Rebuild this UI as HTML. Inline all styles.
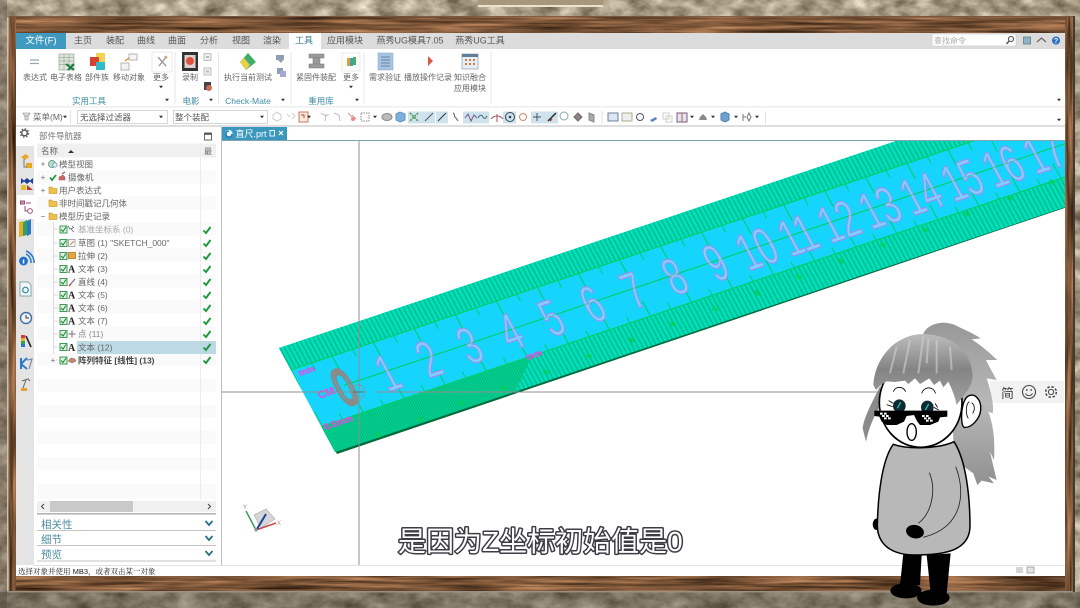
<!DOCTYPE html>
<html lang="zh"><head><meta charset="utf-8"><title>UG</title>
<style>
html,body{margin:0;padding:0;background:#8a8378;width:1080px;height:608px;overflow:hidden}
svg{display:block}
text{font-family:"Liberation Sans","Noto Sans CJK SC",sans-serif}
.t{font-size:8px;fill:#666}
.m{text-anchor:middle}
.g{font-size:8.5px;fill:#3f8ea6;text-anchor:middle}
.n{font-size:8.5px;fill:#666}
.ac{font-size:10.5px;fill:#4d8ba0}
.d{font-size:54px;fill:#7fd0ff;stroke:#a08cf0;stroke-width:1.2;text-anchor:middle}
.pk{font-size:9.5px;font-weight:bold;fill:#e64ce6;stroke:#e64ce6;stroke-width:.2}
</style></head><body>
<svg width="1080" height="608" viewBox="0 0 1080 608" xmlns="http://www.w3.org/2000/svg">
<defs>
<filter id="stone" x="0" y="0" width="100%" height="100%" color-interpolation-filters="sRGB"><feTurbulence type="fractalNoise" baseFrequency="0.045 0.07" numOctaves="5" seed="7"/><feColorMatrix values=".75 0 0 0 .28  .75 0 0 0 .23  .75 0 0 0 .14  0 0 0 0 1"/></filter>
<filter id="woodH" x="0" y="0" width="100%" height="100%" color-interpolation-filters="sRGB"><feTurbulence type="fractalNoise" baseFrequency="0.012 0.3" numOctaves="4" seed="3"/><feColorMatrix values=".8 0 0 0 .08  .6 0 0 0 .03  .45 0 0 0 -.01  0 0 0 0 1"/></filter>
<filter id="woodV" x="0" y="0" width="100%" height="100%" color-interpolation-filters="sRGB"><feTurbulence type="fractalNoise" baseFrequency="0.3 0.012" numOctaves="4" seed="5"/><feColorMatrix values=".8 0 0 0 .08  .6 0 0 0 .03  .45 0 0 0 -.01  0 0 0 0 1"/></filter>
<filter id="soft"><feGaussianBlur stdDeviation=".35"/></filter>
<clipPath id="vp"><rect x="222" y="141" width="843" height="424"/></clipPath>
<pattern id="hat" width="4.33" height="10" patternUnits="userSpaceOnUse"><rect width="4.33" height="10" fill="#00e0b6"/><rect width="1.4" height="10" fill="#00b894"/></pattern>
<pattern id="den" width="2.165" height="10" patternUnits="userSpaceOnUse"><rect width="2.165" height="10" fill="#00d292"/><rect width=".9" height="10" fill="#00b87c"/></pattern>
<pattern id="tickT" x="43" y="25" width="43.3" height="20" patternUnits="userSpaceOnUse"><rect x="0" width="1.1" height="18" fill="#00cf66"/><rect x="21.6" width="1" height="8" fill="#00cf66"/></pattern>
<pattern id="tickB" x="22" y="70" width="43.3" height="20" patternUnits="userSpaceOnUse"><rect x="21.6" y="2" width="1.1" height="18" fill="#00cf66"/><rect x="0" y="12" width="1" height="8" fill="#00cf66"/></pattern>
<linearGradient id="hg" x1="0" y1="0" x2="0" y2="1"><stop offset="0" stop-color="#bcbcbc"/><stop offset=".5" stop-color="#848484"/><stop offset="1" stop-color="#a0a0a0"/></linearGradient>
<linearGradient id="pg" x1="0" y1="0" x2="0" y2="1"><stop offset="0" stop-color="#989898"/><stop offset=".5" stop-color="#b8b8b8"/><stop offset="1" stop-color="#909090"/></linearGradient>
<g id="c"><path d="M-3,1 L3,-1 M-1,-3 L1,3 M-2.5,-2 L2.5,2" stroke="#00cf55" stroke-width="1.1" fill="none"/></g>
<path id="tk" d="M-3.5,.5 L-1,3 L3.5,-3" stroke="#1d9a3e" stroke-width="1.9" fill="none"/>
<g id="cb"><rect x="-3" y="-3.5" width="7" height="7" fill="#dff3e0" stroke="#2e8f4a" stroke-width=".9"/><path d="M-2,0 L0,2 L3,-2.5" stroke="#1d8a3a" stroke-width="1.1" fill="none"/></g>
<path id="dn" d="M-2,-1.2 L2,-1.2 L0,1.2 Z" fill="#333"/>
<path id="chev" d="M-3.5,-2 L0,2 L3.5,-2" stroke="#2a6f87" stroke-width="1.8" fill="none"/>
</defs>

<!-- stone background -->
<rect width="1080" height="608" fill="#968e80" filter="url(#stone)"/>
<rect y="592" width="1080" height="16" fill="#3a3630" opacity=".4"/>
<rect x="0" y="0" width="7" height="608" fill="#3a3028" opacity=".3"/>
<rect x="478" y="0" width="125" height="5" fill="#a8977b"/><rect x="478" y="5" width="125" height="2" fill="#ece2d0"/>

<!-- wood frame -->
<rect x="7" y="16" width="1066" height="17" filter="url(#woodH)"/>
<rect x="7" y="576" width="1066" height="16" filter="url(#woodH)"/>
<rect x="7" y="16" width="9" height="576" filter="url(#woodV)"/>
<rect x="1065" y="16" width="9" height="576" filter="url(#woodV)"/>
<rect x="7" y="16" width="1.5" height="576" fill="#cfc3b0"/>
<rect x="7" y="16" width="1067" height="1.2" fill="#7b5a42" opacity=".8"/>
<rect x="7" y="591" width="1067" height="1.5" fill="#9a9084"/>
<rect x="1073" y="16" width="2" height="576" fill="#403a34"/>

<g filter="url(#soft)">
<!-- UI base -->
<rect x="16" y="33" width="1049" height="543" fill="#fff"/>
<rect x="16" y="33" width="1049" height="16" fill="#dcdcdc"/>
<rect x="16" y="33" width="50" height="16" fill="#3f9abf"/>
<text x="41" y="43.5" class="m" style="font-size:9.5px;fill:#fff">文件(F)</text>
<rect x="289" y="33" width="32" height="16" fill="#fff"/>
<g>
<text x="83" y="43.5" class="m" font-size="9" fill="#555">主页</text>
<text x="115" y="43.5" class="m" font-size="9" fill="#555">装配</text>
<text x="146" y="43.5" class="m" font-size="9" fill="#555">曲线</text>
<text x="177" y="43.5" class="m" font-size="9" fill="#555">曲面</text>
<text x="209" y="43.5" class="m" font-size="9" fill="#555">分析</text>
<text x="241" y="43.5" class="m" font-size="9" fill="#555">视图</text>
<text x="272" y="43.5" class="m" font-size="9" fill="#555">渲染</text>
<text x="304" y="43.5" class="m" font-size="9" fill="#3a7d99">工具</text>
<text x="345" y="43.5" class="m" font-size="9" fill="#555">应用模块</text>
<text x="410" y="43.5" class="m" font-size="9" fill="#555">燕秀UG模具7.05</text>
<text x="480" y="43.5" class="m" font-size="9" fill="#555">燕秀UG工具</text>
</g>
<!-- search -->
<rect x="932" y="34" width="84" height="12" fill="#fff" stroke="#c8c8c8" stroke-width=".6"/>
<text x="934" y="43.5" font-size="8" fill="#aaa">查找命令</text>
<circle cx="1011" cy="39" r="2.6" fill="#eee" stroke="#555"/><path d="M1009,41 L1006.5,44" stroke="#555" stroke-width="1.4"/>
<rect x="1023.5" y="37" width="7" height="7" fill="#8fb3c9" stroke="#466" stroke-width=".6"/>
<path d="M1037,42 L1041.5,38 L1046,42" stroke="#666" stroke-width="1.2" fill="none"/>
<circle cx="1056" cy="40.5" r="4" fill="#2c6fc4"/><text x="1056" y="43.2" class="m" font-size="7" font-weight="bold" fill="#fff">?</text>

<!-- ribbon -->
<g stroke="#e2e2e2" stroke-width=".8"><path d="M175,52 V104 M218.5,52 V104 M291,52 V104 M364,52 V104 M491,52 V104"/></g>
<path d="M30,60 H39 M30,63.5 H39" stroke="#9aa6b2" stroke-width="1.2"/>
<g><rect x="59" y="54" width="15" height="16" fill="#dfe6dc" stroke="#8a9a88" stroke-width=".6"/><path d="M59,57.5 H74 M59,61 H74 M59,64.5 H74 M64,54 V70 M69,54 V70" stroke="#7e9a80" stroke-width=".5"/><path d="M66,64 L74,70 M74,64 L68,70" stroke="#157a3a" stroke-width="2"/></g>
<g><rect x="96" y="53" width="9" height="11" fill="#f2d35a"/><rect x="90" y="57" width="9" height="9" fill="#d9432f"/><rect x="96" y="62" width="9" height="8" fill="#36b8cc"/></g>
<g fill="#f4f4f4" stroke="#999" stroke-width=".7"><rect x="129" y="54" width="8" height="6"/><rect x="121" y="63" width="8" height="7"/></g><path d="M125,61 L129,58" stroke="#d88a2a" stroke-width="1.2"/>
<rect x="152" y="52" width="20" height="20" rx="1" fill="#fff" stroke="#eaeaea"/><path d="M158,57 L166,66 M166,57 L159,66" stroke="#999" stroke-width="1.4"/><path d="M165,56 l2,2" stroke="#c96" stroke-width="1.6"/>
<rect x="182" y="52" width="16" height="19" fill="#333"/><rect x="184.5" y="55" width="11" height="13" fill="#d9d3cc"/><circle cx="190" cy="61" r="4" fill="#e0503c"/>
<rect x="204" y="53.5" width="7" height="7" fill="#eee" stroke="#aaa" stroke-width=".7"/><rect x="206" y="56" width="3" height="2" fill="#bbb"/>
<rect x="204" y="68" width="7" height="7" fill="#eee" stroke="#aaa" stroke-width=".7"/><rect x="206" y="70.5" width="3" height="2" fill="#bbb"/>
<rect x="204" y="82" width="7" height="8" fill="#444"/><circle cx="209" cy="88" r="3" fill="#d36a5a"/>
<path d="M240,62 L246,70 L256,62 L248,53 Z" fill="#41ad6b"/><path d="M240,62 L246,70 L250,65 L244,58 Z" fill="#e8cf44"/>
<g fill="#8fa0b4"><rect x="276" y="55" width="8" height="5"/><path d="M277,59 l7,0 -3,4 z"/><rect x="277" y="68" width="6" height="6"/><rect x="280" y="71" width="6" height="6" fill="#a7a7d6"/></g>
<g fill="#9a9a9a" stroke="#777" stroke-width=".5"><rect x="309" y="54" width="15" height="4"/><rect x="313" y="58" width="7" height="7"/><rect x="309" y="64" width="15" height="4"/></g>
<rect x="342" y="53" width="18" height="18" rx="1" fill="#fff" stroke="#eaeaea"/><rect x="347" y="58" width="3" height="8" fill="#e0a030"/><rect x="350" y="58" width="3" height="8" fill="#3aa0c8"/><rect x="353" y="57" width="3" height="8" fill="#4fae5a"/>
<rect x="378" y="53" width="15" height="17" fill="#a9c4e2" stroke="#8aa2c0" stroke-width=".5"/><path d="M381,57 H390 M381,60 H390 M381,63 H390 M381,66 H390" stroke="#6b83a6" stroke-width=".9"/>
<path d="M428,56 L433,61 L428,66 Z" fill="#d85c44"/>
<rect x="462" y="54" width="16" height="15" fill="#e7eef5" stroke="#7e8fa2" stroke-width=".6"/><rect x="462" y="54" width="16" height="3" fill="#5f7e9c"/><g fill="#d07a3a"><rect x="465" y="59" width="2" height="2"/><rect x="469" y="59" width="2" height="2"/><rect x="473" y="59" width="2" height="2"/><rect x="465" y="63" width="2" height="2"/><rect x="469" y="63" width="2" height="2"/><rect x="473" y="63" width="2" height="2"/></g>
<g>
<text x="35" y="80" class="t m">表达式</text><text x="66" y="80" class="t m">电子表格</text><text x="97" y="80" class="t m">部件族</text><text x="129" y="80" class="t m">移动对象</text><text x="161" y="80" class="t m">更多</text><text x="190" y="80" class="t m">录制</text><text x="248" y="80" class="t m">执行当前测试</text><text x="316" y="80" class="t m">紧固件装配</text><text x="351" y="80" class="t m">更多</text><text x="385" y="80" class="t m">需求验证</text><text x="428" y="80" class="t m">播放操作记录</text><text x="470" y="80" class="t m">知识融合</text><text x="470" y="91" class="t m">应用模块</text>
</g>
<text x="89" y="104" class="g">实用工具</text><text x="191" y="104" class="g">电影</text><text x="248" y="104" class="g">Check-Mate</text><text x="321" y="104" class="g">重用库</text>
<use href="#dn" x="161" y="87"/><use href="#dn" x="351" y="87"/><use href="#dn" x="167" y="100"/><use href="#dn" x="211" y="100"/><use href="#dn" x="283" y="100"/><use href="#dn" x="357" y="100"/><use href="#dn" x="1059" y="100"/>
<rect x="16" y="106.5" width="1049" height=".8" fill="#e2e2e2"/>

<!-- toolbar -->
<rect x="16" y="125.5" width="1049" height="1" fill="#bdbdbd"/>
<path d="M23,113 h7 l-1.5,3 h-4 z M25,116 v4 h3 v-4" fill="#ddd" stroke="#888" stroke-width=".6"/>
<text x="33" y="120" font-size="8.5" fill="#666">菜单(M)</text><use href="#dn" x="65" y="117"/>
<path d="M70.5,110 V124" stroke="#e2e2e2"/>
<rect x="77.5" y="110.5" width="90" height="13" fill="#fff" stroke="#c6c6c6" stroke-width=".7"/><text x="80" y="120.5" font-size="8.5" fill="#555">无选择过滤器</text><use href="#dn" x="161" y="117"/>
<rect x="173.5" y="110.5" width="94" height="13" fill="#fff" stroke="#c6c6c6" stroke-width=".7"/><text x="175" y="120.5" font-size="8.5" fill="#555">整个装配</text><use href="#dn" x="262" y="117"/>
<!-- highlights -->
<g fill="#cfe3ec"><rect x="408" y="111.5" width="27" height="12"/><rect x="436" y="111.5" width="12" height="12"/><rect x="463" y="111.5" width="26" height="12"/><rect x="503" y="111.5" width="13" height="12"/><rect x="531" y="111.5" width="27" height="12"/></g>
<g fill="none" stroke="#aaa" stroke-width="1">
<path d="M273,115 l4,-3 4,3 v4 l-4,2 -4,-2z" stroke="#ccc"/><path d="M287,114 l3,3 M292,113 l3,3 -3,3" stroke="#ccc"/>
<rect x="299" y="112" width="9" height="10" fill="#fbe9df" stroke="#c97a5a"/><path d="M301,115 h3 v3" stroke="#c04040"/>
<path d="M321,113 l5,3 -1,5 M329,115 l-4,0" stroke="#bbb"/><path d="M334,113 l5,2 1,6" stroke="#bbb"/><path d="M348,113 l4,4 M352,115 l4,4" stroke="#c98"/><circle cx="353" cy="119" r="2" fill="#e88" stroke="none"/>
<rect x="361" y="113" width="8" height="8" stroke="#888" stroke-dasharray="1.5 1"/>
<ellipse cx="387" cy="117" rx="5" ry="3.5" fill="#bbb" stroke="#888"/><path d="M396,114 l4,-2 5,2 v6 l-5,2 -4,-2 z" fill="#7db1dd" stroke="#5f93c0"/>
<path d="M410,113 l8,8 M418,113 l-8,8" stroke="#4d9a5a" stroke-width="1.6" stroke-dasharray="2 1"/><path d="M425,121 l8,-8" stroke="#556" /><path d="M438,121 l8,-8" stroke="#334"/><path d="M453,113 c2,0 1,5 3,5 l2,3" stroke="#556"/>
<path d="M465,118 l3,-4 3,7 3,-6 3,3" stroke="#7a5a8a"/><path d="M478,118 c2,-4 4,-3 5,-1 c2,3 3,1 4,-1" stroke="#467"/><path d="M491,119 c3,-4 9,-4 12,0 M497,114 v8" stroke="#a56"/>
<circle cx="510" cy="117" r="4.5" stroke="#345"/><circle cx="510" cy="117" r="1.3" fill="#345" stroke="none"/>
<circle cx="523" cy="117" r="3.5" stroke="#d08a70"/><path d="M533,117 h8 M537,113 v8" stroke="#456"/><path d="M548,121 l8,-8" stroke="#233" stroke-width="1.5"/><path d="M550,121 l2,-2" stroke="#c33" stroke-width="1.5"/>
<circle cx="564" cy="116" r="4" stroke="#8aa"/><path d="M574,117 l4,-4 4,4 -4,4z" fill="#888" stroke="#766"/><path d="M589,113 l5,2 v7 l-5,-2z" fill="#aaa" stroke="#888"/>
<rect x="608" y="113" width="10" height="8" fill="#dde5ee" stroke="#6a7fa0"/><rect x="622" y="113" width="10" height="8" fill="#eee" stroke="#b0a890"/><circle cx="640" cy="117" r="3.5" stroke="#556"/><path d="M650,120 l6,-3 l1,2 l-5,3z" fill="#5b7fc0" stroke="none"/><rect x="663" y="113" width="6" height="6" stroke="#ccc"/><rect x="666" y="116" width="6" height="6" stroke="#ccc"/>
<rect x="677" y="113" width="10" height="9" fill="#dfe6f0" stroke="#7a5a7a"/><path d="M682,113 v9" stroke="#c55"/>
<path d="M699,120 h8 l-1,-3 -3,-3 -3,3z" fill="#8a8a8a" stroke="none"/><path d="M721,114 l4,-2 4,2 v6 l-4,2 -4,-2z" fill="#6f9fd0" stroke="#4d7fb0"/><path d="M743,114 l0,7 M743,117 h3 M749,113 l2,4 -2,4 -2,-4z" stroke="#777"/>
</g>
<use href="#dn" x="309" y="117"/><use href="#dn" x="375" y="117"/><use href="#dn" x="692" y="117"/><use href="#dn" x="713" y="117"/><use href="#dn" x="736" y="117"/><use href="#dn" x="757" y="117"/><use href="#dn" x="1059" y="120"/>
<path d="M602,111 V124 M765.5,111 V124" stroke="#e2e2e2"/>

<!-- left sidebar -->
<rect x="16" y="146" width="18" height="419" fill="#e4e4e4"/>
<rect x="17" y="195" width="17" height="24" fill="#fff"/>
<g transform="translate(24.5,133)"><circle r="2.8" fill="none" stroke="#555" stroke-width="1.4"/><circle r="4.2" fill="none" stroke="#555" stroke-width="1.2" stroke-dasharray="1.6 1.7"/></g>
<g><path d="M21,157 l5,-3 3,3 -4,3z M26,163 h6 v5 h-6z" fill="#e6a822"/><path d="M24,159 v8 h3" stroke="#777" fill="none"/></g>
<g><path d="M21,178 l3,2.5 3,-2.5 3,2.5 3,-2.5 v6 l-3,-2.5 -3,2.5 -3,-2.5 -3,2.5z" fill="#1f3f9a"/><rect x="21" y="185" width="5" height="5" fill="#e2c030"/><path d="M27,185 l6,5 h-6z" fill="#c0392b"/></g>
<g stroke="#a24a7a" fill="none"><rect x="20.5" y="201" width="4" height="3" fill="#d9a"/><path d="M26,203 h5 M25,206 v5 h3"/><circle cx="30" cy="211" r="2.4"/></g>
<g><path d="M19,222 l4,-1 v15 l-4,1z" fill="#e2b022"/><path d="M23,222 l4,-2 v15 l-4,1z" fill="#35a060"/><path d="M27,221 l4,-2 v15 l-4,2z" fill="#2a78c8"/></g>
<g fill="none"><circle cx="23.5" cy="261" r="4.4" fill="#1f6fc8"/><rect x="22.8" y="259.5" width="1.5" height="4" fill="#fff"/><path d="M26,254 a9,9 0 0 1 5,9 M26,251 a12,12 0 0 1 8,12" stroke="#2a78c8" stroke-width="1.5"/></g>
<g><path d="M20,282 h8 l3,3 v11 h-11z" fill="#f2f6f8" stroke="#6a8a9a" stroke-width=".7"/><circle cx="25.5" cy="290" r="2.8" fill="none" stroke="#2a8f9a" stroke-width="1.2"/></g>
<g><circle cx="26" cy="318" r="5.5" fill="#f2f2f2" stroke="#3a6fa8" stroke-width="1.4"/><path d="M26,315 v3 h3" stroke="#334" fill="none"/></g>
<g><rect x="21" y="335" width="4" height="3" fill="#d23a3a"/><rect x="21" y="338" width="4" height="3" fill="#e6b022"/><rect x="21" y="341" width="4" height="3" fill="#35a060"/><rect x="21" y="344" width="4" height="3" fill="#2a78c8"/><path d="M26,336 l5,11" stroke="#223" stroke-width="1.6"/></g>
<g><path d="M21,358 v11 M21,364 l6,-6 M21,364 l6,5" stroke="#2a78c8" stroke-width="2" fill="none"/><path d="M27,360 l5,-1 -3,10" stroke="#7a8aa0" stroke-width="1.2" fill="none"/></g>
<g stroke="#666" fill="none"><path d="M22,381 l6,-2 2,2 M26,380 l-3,8"/><rect x="21" y="388" width="6" height="3" fill="#e6a030" stroke="none"/></g>

<!-- navigator -->
<text x="39" y="139" font-size="8.5" fill="#777">部件导航器</text>
<rect x="204.5" y="133" width="7" height="7" fill="#fff" stroke="#555" stroke-width=".9"/><rect x="204.5" y="133" width="7" height="1.8" fill="#555"/>
<rect x="37" y="143.5" width="179" height="14" fill="#f0f0f0"/>
<text x="41" y="154" font-size="8.5" fill="#666">名称</text><path d="M68,153 l3,-3 3,3z" fill="#333"/>
<text x="204" y="154" font-size="8" fill="#666">最</text>
<g fill="#fafafa"><rect x="37" y="170.5" width="179" height="13"/><rect x="37" y="196.5" width="179" height="13"/><rect x="37" y="222.5" width="179" height="13"/><rect x="37" y="248.5" width="179" height="13"/><rect x="37" y="274.5" width="179" height="13"/><rect x="37" y="300.5" width="179" height="13"/><rect x="37" y="326.5" width="179" height="13"/><rect x="37" y="352.5" width="179" height="13"/><rect x="37" y="379" width="179" height="13"/><rect x="37" y="405" width="179" height="13"/><rect x="37" y="431" width="179" height="13"/><rect x="37" y="457" width="179" height="13"/><rect x="37" y="484" width="179" height="15"/></g>
<path d="M200.5,143 V500" stroke="#ececec"/>
<rect x="77" y="341" width="139" height="13" fill="#bcd9e4"/>
<path d="M53.5,222 V354 M54,229 H58 M54,243 H58 M54,256 H58 M54,269 H58 M54,282 H58 M54,295 H58 M54,308 H58 M54,321 H58 M54,334 H58 M54,347 H58 M56,360 H58" stroke="#cfcfcf" stroke-width=".7"/>
<path d="M41,164 h4 M43,162 v4 M41,177.5 h4 M43,175.5 v4 M41,190.5 h4 M43,188.5 v4 M41,216.5 h4 M51,360.5 h4 M53,358.5 v4" stroke="#888" stroke-width=".8"/>
<g><circle cx="52" cy="164" r="3.6" fill="#b8dcc8" stroke="#4a8a7a" stroke-width=".7"/><circle cx="55" cy="165" r="2.2" fill="#e4eef4" stroke="#4a7a9a" stroke-width=".6"/></g>
<path d="M50,177.5 l2,2.5 4,-5" stroke="#1d9a3e" stroke-width="1.8" fill="none"/>
<path d="M59,177 l4,-2 2,2 v3 h-6z" fill="#c66" stroke="#844" stroke-width=".4"/><path d="M62,174 l3,-2" stroke="#a55" stroke-width="1.2"/>
<g fill="#f1c04a" stroke="#b48720" stroke-width=".5"><path d="M49,187 h3 l1,1.5 h4 v5 h-8z"/><path d="M49,200 h3 l1,1.5 h4 v5 h-8z"/><path d="M49,213 h3 l1,1.5 h4 v5 h-8z"/></g>
<g>
<text x="59" y="167.5" class="n">模型视图</text><text x="68" y="180.5" class="n">摄像机</text><text x="59" y="193.5" class="n">用户表达式</text><text x="59" y="206.5" class="n">非时间戳记几何体</text><text x="59" y="219.5" class="n">模型历史记录</text>
<text x="78" y="232.5" class="n" style="fill:#aaa">基准坐标系 (0)</text><text x="78" y="246" class="n">草图 (1) "SKETCH_000"</text><text x="78" y="259" class="n">拉伸 (2)</text><text x="78" y="272" class="n">文本 (3)</text><text x="78" y="285" class="n">直线 (4)</text><text x="78" y="298" class="n">文本 (5)</text><text x="78" y="311" class="n">文本 (6)</text><text x="78" y="324" class="n">文本 (7)</text><text x="78" y="337" class="n" style="fill:#888">点 (11)</text><text x="78" y="350.5" class="n">文本 (12)</text><text x="78" y="363.5" class="n" style="font-weight:bold;fill:#444">阵列特征 [线性] (13)</text>
</g>
<use href="#cb" x="63" y="229.5"/><use href="#cb" x="63" y="243"/><use href="#cb" x="63" y="256"/><use href="#cb" x="63" y="269"/><use href="#cb" x="63" y="282"/><use href="#cb" x="63" y="295"/><use href="#cb" x="63" y="308"/><use href="#cb" x="63" y="321"/><use href="#cb" x="63" y="334"/><use href="#cb" x="63" y="347"/><use href="#cb" x="63" y="360.5"/>
<g fill="none">
<path d="M68,226 l2,3 3,-1 M71,229 l3,3 M72,226 l2,2" stroke="#667" stroke-width=".8"/>
<rect x="68.5" y="239.5" width="6.5" height="7" stroke="#889" stroke-width=".7"/><path d="M70,245 l4,-4" stroke="#c6862a"/>
<rect x="68.5" y="252.5" width="7" height="6" fill="#e8a440" stroke="#a86a1a" stroke-width=".7"/>
<path d="M69,286 l6,-7" stroke="#666"/><path d="M69,286 l2,-2" stroke="#c33"/>
<path d="M72,330.5 v7 M68.5,334 h7" stroke="#777"/>
<path d="M68,361 l3,-3 4,1 1,2 -4,2z" fill="#c68a6a" stroke="#7a5a5a" stroke-width=".5"/>
</g>
<g font-size="10" font-weight="bold" fill="#222"><text x="68" y="272.5" style="font-family:'Liberation Serif',serif">A</text><text x="68" y="298.5" style="font-family:'Liberation Serif',serif">A</text><text x="68" y="311.5" style="font-family:'Liberation Serif',serif">A</text><text x="68" y="324.5" style="font-family:'Liberation Serif',serif">A</text><text x="68" y="351" style="font-family:'Liberation Serif',serif">A</text></g>
<use href="#tk" x="207" y="230"/><use href="#tk" x="207" y="243"/><use href="#tk" x="207" y="256"/><use href="#tk" x="207" y="269"/><use href="#tk" x="207" y="282"/><use href="#tk" x="207" y="295"/><use href="#tk" x="207" y="308"/><use href="#tk" x="207" y="321"/><use href="#tk" x="207" y="334"/><use href="#tk" x="207" y="347"/><use href="#tk" x="207" y="360"/>
<!-- scrollbar -->
<rect x="37" y="501" width="179" height="11" fill="#f0f0f0"/><rect x="50" y="501" width="83" height="11" fill="#c9c9c9"/>
<path d="M44,504 l-2.5,2.5 2.5,2.5 M208,504 l2.5,2.5 -2.5,2.5" stroke="#444" fill="none"/>
<rect x="37" y="513" width="179" height="1.6" fill="#b5b5b5"/>
<path d="M37,530.5 H216 M37,545.5 H216 M37,561 H216" stroke="#c4c4c4"/>
<text x="41" y="528" class="ac">相关性</text><text x="41" y="543" class="ac">细节</text><text x="41" y="558" class="ac">预览</text>
<use href="#chev" x="209" y="523"/><use href="#chev" x="209" y="538"/><use href="#chev" x="209" y="553"/>

<!-- file tab -->
<rect x="222" y="127" width="65" height="13.5" fill="#3a97bd"/>
<circle cx="229" cy="133.5" r="3.6" fill="#dff" /><path d="M229,131 a3,3 0 1 0 3,3" stroke="#2a63b0" fill="none" stroke-width="1.2"/>
<text x="235.5" y="137" font-size="9" fill="#fff">直尺.prt</text>
<rect x="270" y="130.5" width="4.5" height="5.5" fill="none" stroke="#fff" stroke-width=".9"/>
<path d="M279,131 l4,4 M283,131 l-4,4" stroke="#fff" stroke-width="1.2"/>
<rect x="222" y="140" width="843" height="1" fill="#7da6b0"/>
<rect x="221" y="127" width="1" height="438" fill="#bdbdbd"/>

<!-- viewport: ruler -->
<g clip-path="url(#vp)">
<path d="M279,348 L281,350 L337,454 L1100,196 L1100,190 Z" fill="#006a3a"/>
<g transform="matrix(.948,-.318,.475,.881,279,348)">
<rect x="0" y="0" width="1000" height="118" fill="#12d5fd"/>
<rect x="0" y="0" width="1000" height="25" fill="url(#hat)"/>
<rect x="0" y="89" width="1000" height="29" fill="url(#hat)"/>
<path d="M0,89 H222 L190,118 H0 Z" fill="url(#den)"/>
<rect x="0" y="25" width="1000" height="18" fill="url(#tickT)"/>
<rect x="0" y="70" width="1000" height="20" fill="url(#tickB)"/>
<path d="M0,25 H1000 M0,89 H1000 M40,57 H1000" stroke="#00cf66" stroke-width="1.1" fill="none"/>
<g transform="translate(0,77.5) scale(.6,1)">
<text x="141.7" class="d">1</text><text x="213.8" class="d">2</text><text x="286" class="d">3</text><text x="358" class="d">4</text><text x="430" class="d">5</text><text x="502" class="d">6</text><text x="574.3" class="d">7</text><text x="646.5" class="d">8</text><text x="718.7" class="d">9</text><text x="790.8" class="d">10</text><text x="863" class="d">11</text><text x="935" class="d">12</text><text x="1007" class="d">13</text><text x="1079.5" class="d">14</text><text x="1151.7" class="d">15</text><text x="1223.8" class="d">16</text><text x="1296" class="d">17</text>
<text x="66" style="font-size:54px;fill:none;stroke:#8a8a8a;stroke-width:4;text-anchor:middle">0</text>
</g>
<path d="M40,57 H1000" stroke="#00cf66" stroke-width=".8" opacity=".55" fill="none"/>
<text x="5" y="34" class="pk">mm</text>
<text x="216" y="92" class="pk">mm</text>
<text x="2" y="94" class="pk">0.5mm</text>
<text x="12" y="62" class="pk" style="font-size:11px">CM</text>
</g>
<g>
<use href="#c" x="378" y="435"/><use href="#c" x="420" y="419"/><use href="#c" x="462" y="403"/><use href="#c" x="504" y="388"/><use href="#c" x="546" y="372"/><use href="#c" x="589" y="356"/><use href="#c" x="631" y="340"/><use href="#c" x="673" y="324"/><use href="#c" x="715" y="309"/><use href="#c" x="757" y="293"/><use href="#c" x="799" y="277"/><use href="#c" x="841" y="261"/><use href="#c" x="883" y="245"/><use href="#c" x="925" y="230"/><use href="#c" x="967" y="214"/><use href="#c" x="1010" y="198"/><use href="#c" x="1052" y="182"/>
</g>
<!-- crosshair -->
<path d="M359,141 V565 M222,392 H366 M376,392 H880" stroke="#8f8f8f" stroke-width="1"/>
<circle cx="358" cy="392" r="7" fill="none" stroke="#7f9aa8" stroke-width=".9"/><path d="M353,392 H363" stroke="#666"/>
<!-- triad -->
<path d="M254,515 l12,-6 9,10 -14,9 z" fill="#d6d6d6" stroke="#a8a8a8" stroke-width=".6"/>
<path d="M256,530 L246,511" stroke="#3f9a58" stroke-width="1.5"/>
<path d="M256,530 L276,523" stroke="#c24a4a" stroke-width="1.5"/>
<path d="M257,529 L266,514" stroke="#1f3f9a" stroke-width="2"/>
<circle cx="256" cy="530" r="1.6" fill="#999"/>
<text x="243" y="509" font-size="6" fill="#888">Y</text><text x="277" y="525" font-size="6" fill="#c88">X</text>
</g>

<!-- status bar -->
<rect x="34" y="565" width="1031" height="1" fill="#c4c4c4"/>
<rect x="16" y="565.5" width="1049" height="10.5" fill="#fff"/>
<text x="18" y="574" font-size="7.5" fill="#222" style="font-family:'Liberation Sans','Noto Serif CJK SC',serif">选择对象并使用 MB3，或者双击某一对象</text>
<rect x="1016" y="567" width="7" height="6" fill="#d5d5d5"/><rect x="1027" y="567" width="7" height="6" fill="#e5e5e5" stroke="#778" stroke-width=".6"/>

<!-- IME bar -->
<rect x="990" y="381" width="74" height="22" fill="#f2f2f2"/>
<text x="1001" y="398" font-size="13" fill="#444">简</text>
<circle cx="1029" cy="392" r="6.5" fill="none" stroke="#444" stroke-width="1.1"/><circle cx="1026.8" cy="390" r=".9" fill="#444"/><circle cx="1031.2" cy="390" r=".9" fill="#444"/><path d="M1025.5,393.5 a4,4 0 0 0 7,0" fill="none" stroke="#444"/>
<circle cx="1051" cy="392" r="2.6" fill="none" stroke="#444"/><circle cx="1051" cy="392" r="5.3" fill="none" stroke="#444" stroke-width="1.5" stroke-dasharray="2.4 1.8"/>
</g>

<!-- character -->
<g transform="translate(840,310) scale(.33333)">
<path d="M250,70 C265,40 310,30 345,45 C370,58 400,70 422,85 L395,88 C430,110 455,135 472,150 L438,150 C450,175 462,195 470,210 L440,205 C455,250 462,290 458,310 L445,305 C462,350 465,400 462,450 L450,425 C458,460 465,490 470,510 L445,500 L462,520 L425,512 L412,525 L400,490 L372,470 L340,390 L330,200 Z" fill="url(#pg)"/>
<path d="M122,225 C100,270 72,320 68,355 L78,395 C85,360 100,320 120,290 Z" fill="#8a8a8a"/>
<ellipse cx="242" cy="278" rx="124" ry="134" fill="#fff" stroke="#000" stroke-width="5"/>
<path d="M100,225 C105,140 170,72 250,72 C330,75 395,115 398,200 C395,235 370,255 350,285 C345,260 335,235 325,215 L310,232 L300,212 L282,225 L268,205 L240,222 L225,205 L205,222 L195,212 L165,216 L140,214 L122,225 L108,240 Z" fill="url(#hg)"/>
<path d="M250,80 L235,190 M210,90 L190,190 M290,90 L290,190 M170,110 L150,190 M330,110 L335,180 M265,85 L260,160" stroke="#d0d0d0" stroke-width="6" fill="none" opacity=".6"/>
<path d="M385,258 C405,248 425,270 422,300 C420,325 395,355 372,352 C360,345 362,270 385,258 Z" fill="#fff" stroke="#000" stroke-width="4"/>
<path d="M388,275 C375,285 378,315 385,325 M395,278 C405,285 405,300 398,310" stroke="#000" stroke-width="2.5" fill="none"/>
<path d="M160,245 C165,228 190,228 197,245 M245,250 C252,228 280,228 287,250" fill="none" stroke="#000" stroke-width="2.5"/>
<ellipse cx="178" cy="288" rx="19" ry="20" fill="#0f2a30"/><ellipse cx="262" cy="292" rx="19" ry="20" fill="#0f2a30"/>
<path d="M172,295 l10,-18 M256,300 l10,-18" stroke="#2bbab0" stroke-width="4"/>
<path d="M140,284 L158,290 M146,272 L160,280 M285,280 L293,292 M282,292 L296,300" stroke="#000" stroke-width="2.5"/>
<path d="M103,302 H322 V320 L300,322 L295,335 L270,345 H240 L232,335 L222,315 L200,318 L192,335 L170,345 H140 L125,335 L118,320 L103,318 Z" fill="#000"/>
<g fill="#fff"><rect x="120" y="308" width="8" height="6"/><rect x="132" y="308" width="8" height="6"/><rect x="126" y="315" width="8" height="6"/><rect x="138" y="315" width="8" height="6"/><rect x="132" y="322" width="8" height="6"/><rect x="144" y="322" width="8" height="6"/><rect x="246" y="315" width="8" height="6"/><rect x="258" y="315" width="8" height="6"/><rect x="252" y="322" width="8" height="6"/><rect x="264" y="322" width="8" height="6"/><rect x="258" y="329" width="8" height="6"/><rect x="270" y="329" width="8" height="6"/></g>
<ellipse cx="215" cy="366" rx="14" ry="25" fill="#fff" stroke="#000" stroke-width="4"/>
<path d="M190,730 L180,825 L240,825 L245,735 Z" fill="#000"/><path d="M260,735 L272,850 L320,850 L332,730 Z" fill="#000"/>
<ellipse cx="198" cy="842" rx="47" ry="23" fill="#000"/><ellipse cx="280" cy="863" rx="49" ry="24" fill="#000"/>
<ellipse cx="110" cy="643" rx="12" ry="17" fill="#000"/>
<path d="M160,403 C125,450 114,560 112,645 C112,700 150,735 225,735 C320,735 388,720 390,650 C390,560 378,450 342,395 C300,415 205,420 160,403 Z" fill="#b8b8b8" stroke="#000" stroke-width="4.5"/>
<path d="M268,488 C290,540 275,610 235,640 M347,470 C375,540 375,650 250,682" fill="none" stroke="#222" stroke-width="2.5"/>
<ellipse cx="225" cy="665" rx="27" ry="20" fill="#000" transform="rotate(12 225 665)"/>
</g>

<!-- subtitle -->
<text x="398" y="551" font-size="28" fill="#fff" stroke="#3c3c44" stroke-width="3" paint-order="stroke" style="font-family:'Liberation Sans','Noto Sans CJK SC',sans-serif;stroke-linejoin:round">是因为Z坐标初始值是0</text>
</svg>
</body></html>
